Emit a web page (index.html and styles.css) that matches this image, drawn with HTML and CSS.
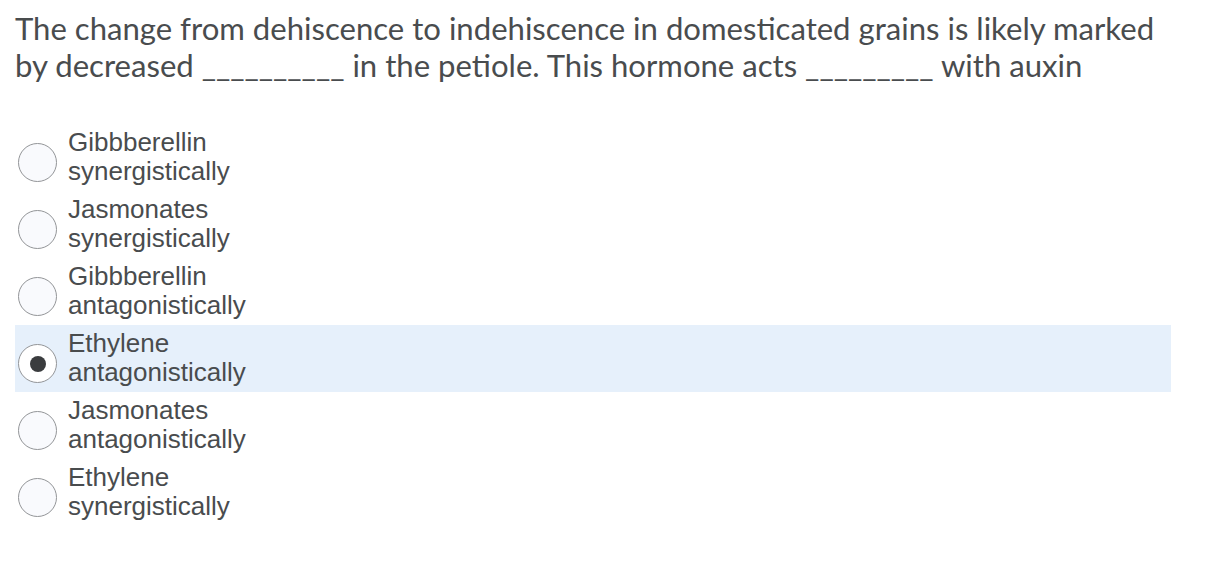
FILE: index.html
```html
<!DOCTYPE html>
<html>
<head>
<meta charset="utf-8">
<link rel="stylesheet" href="styles.css">
</head>
<body>
<div class="question">
  <p class="prompt">The change from dehiscence to indehiscence in domesticated grains is likely marked by decreased __________ in the petiole. This hormone acts _________ with auxin</p>
  <div class="options">
    <label class="option"><span class="radio"></span><span class="text">Gibbberellin<br>synergistically</span></label>
    <label class="option"><span class="radio"></span><span class="text">Jasmonates<br>synergistically</span></label>
    <label class="option"><span class="radio"></span><span class="text">Gibbberellin<br>antagonistically</span></label>
    <label class="option selected"><span class="radio checked"></span><span class="text">Ethylene<br>antagonistically</span></label>
    <label class="option"><span class="radio"></span><span class="text">Jasmonates<br>antagonistically</span></label>
    <label class="option"><span class="radio"></span><span class="text">Ethylene<br>synergistically</span></label>
  </div>
</div>
</body>
</html>
```
FILE: styles.css
```css
body {
  margin: 0;
  background: #ffffff;
  color: #494c4e;
}
.question {
  padding: 10px 47px 0 15px;
}
.prompt {
  margin: 0;
  font-family: Lato, "Open Sans", sans-serif;
  font-size: 31.1px;
  line-height: 37px;
}
.options {
  margin-top: 40px;
  display: flex;
  flex-direction: column;
}
.option {
  display: flex;
  align-items: flex-start;
  height: 67px;
  box-sizing: border-box;
}
.option.selected {
  background: #e6f0fb;
}
.radio {
  width: 39px;
  height: 39px;
  box-sizing: border-box;
  border: 1px solid #939598;
  border-radius: 50%;
  background: #f9fafd;
  margin: 19px 11px 0 3px;
  display: flex;
  align-items: center;
  justify-content: center;
  flex: none;
}
.radio.checked {
  background: #ffffff;
}
.radio.checked::after {
  content: "";
  width: 16px;
  height: 16px;
  border-radius: 50%;
  background: #3a3c3e;
}
.text {
  font-family: "Liberation Sans", Arial, sans-serif;
  font-size: 26px;
  line-height: 29px;
  padding-top: 4px;
}
```
